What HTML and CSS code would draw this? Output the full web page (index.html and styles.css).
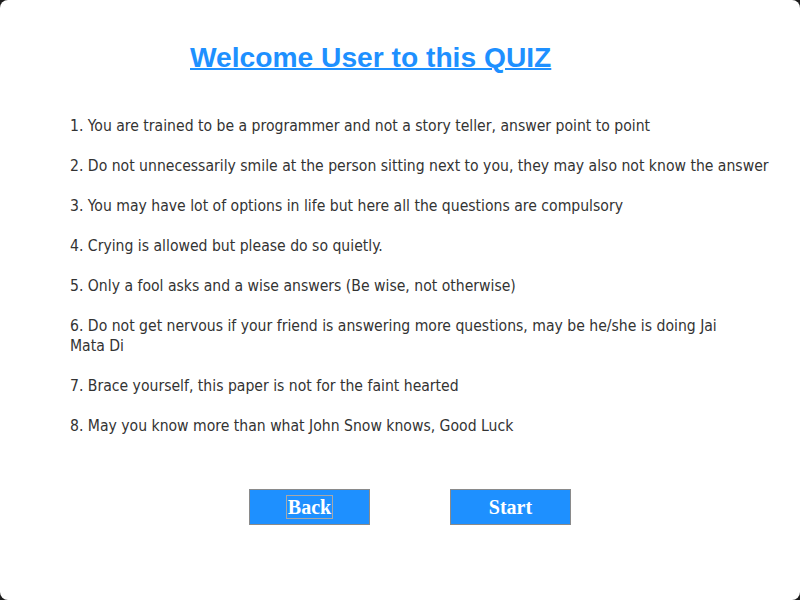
FILE: index.html
```html
<!DOCTYPE html>
<html>
<head>
<meta charset="utf-8">
<link rel="stylesheet" href="styles.css">
</head>
<body>
<div class="page">
  <h1 class="title">Welcome User to this QUIZ</h1>
  <div class="rules">
    <p>1. You are trained to be a programmer and not a story teller, answer point to point</p>
    <p>2. Do not unnecessarily smile at the person sitting next to you, they may also not know the answer</p>
    <p>3. You may have lot of options in life but here all the questions are compulsory</p>
    <p>4. Crying is allowed but please do so quietly.</p>
    <p>5. Only a fool asks and a wise answers (Be wise, not otherwise)</p>
    <p>6. Do not get nervous if your friend is answering more questions, may be he/she is doing Jai Mata&nbsp;Di</p>
    <p>7. Brace yourself, this paper is not for the faint hearted</p>
    <p>8. May you know more than what John Snow knows, Good Luck</p>
  </div>
  <div class="buttons">
    <a class="btn" href="#"><span class="focus">Back</span></a>
    <a class="btn" href="#"><span>Start</span></a>
  </div>
</div>
</body>
</html>
```
FILE: styles.css
```css
html {
  background: #1c1c1c;
  margin: 0;
  padding: 0;
}
body {
  margin: 0;
  width: 800px;
  height: 600px;
  background: #ffffff;
  border-radius: 8px;
  overflow: hidden;
}
.page {
  padding-top: 40px;
}
.title {
  margin: 0 0 0 190px;
  font-family: "Liberation Sans", Arial, sans-serif;
  font-weight: bold;
  font-size: 28.2px;
  line-height: 34px;
  color: #1e90ff;
  text-decoration: underline;
  text-decoration-thickness: 2px;
}
.rules {
  margin: 42px 0 0 70px;
  width: 702px;
  font-family: "DejaVu Sans Condensed", "DejaVu Sans", sans-serif;
  font-size: 15.6px;
  line-height: 20px;
  color: #333333;
}
.rules p {
  margin: 0 0 20px 0;
}
.buttons {
  display: flex;
  gap: 80px;
  margin: 53px 0 0 249px;
}
.btn {
  display: flex;
  align-items: center;
  justify-content: center;
  width: 119px;
  height: 34px;
  background: #1e90ff;
  border: 1px solid #8a8a8a;
  font-family: "Liberation Serif", "Times New Roman", serif;
  font-weight: bold;
  font-size: 20px;
  color: #ffffff;
  text-decoration: none;
}
.btn span {
  line-height: 22px;
  padding: 0 1px;
  border: 1px solid transparent;
}
.btn .focus {
  border-color: #a8a8a8;
}
```
